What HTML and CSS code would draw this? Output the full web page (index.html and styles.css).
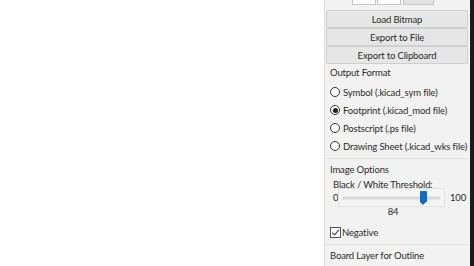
FILE: index.html
```html
<!DOCTYPE html>
<html lang="en">

<head>
    <meta charset="UTF-8">
    <title>Bitmap to Component</title>
    <link rel="stylesheet" href="styles.css">
</head>

<body>
    <div class="canvas"></div>

    <div class="panel">
        <div class="spin-row">
            <span class="spin"></span>
            <span class="spin"></span>
            <span class="spin spin-gray"></span>
        </div>

        <button class="btn">Load Bitmap</button>
        <button class="btn">Export to File</button>
        <button class="btn">Export to Clipboard</button>

        <div class="section">
            <div class="section-title">Output Format</div>
            <label class="radio-row"><span class="radio"></span>Symbol (.kicad_sym file)</label>
            <label class="radio-row"><span class="radio checked"></span>Footprint (.kicad_mod file)</label>
            <label class="radio-row"><span class="radio"></span>Postscript (.ps file)</label>
            <label class="radio-row"><span class="radio"></span>Drawing Sheet (.kicad_wks file)</label>
        </div>

        <div class="section section-line">
            <div class="section-title">Image Options</div>
            <div class="sub-label">Black / White Threshold:</div>
            <div class="slider-row">
                <span class="slider-min">0</span>
                <div class="slider">
                    <div class="track"></div>
                    <div class="thumb"></div>
                </div>
                <span class="slider-max">100</span>
            </div>
            <div class="slider-value">84</div>
            <label class="check-row">
                <span class="checkbox">
                    <svg width="9" height="9" viewBox="0 0 9 9">
                        <path d="M1.2 4.6 L3.5 6.9 L7.9 1.8" fill="none" stroke="#444" stroke-width="1.1" />
                    </svg>
                </span>
                Negative
            </label>
        </div>

        <div class="section section-line section-last">
            <div class="section-title">Board Layer for Outline</div>
        </div>
    </div>

    <div class="edge"></div>
</body>

</html>
```

FILE: styles.css
```css
body {
    margin: 0;
    height: 266px;
    display: flex;
    overflow: hidden;
    background: #fff;
    font-family: Lato, "Liberation Sans", sans-serif;
    font-size: 9.5px;
    letter-spacing: -0.15px;
    color: #2b2b2b;
}

.canvas {
    flex: 1;
    background: #fff;
}

.panel {
    width: 146px;
    background: #f2f2f2;
    border-left: 1px solid #dcdcdc;
    display: flex;
    flex-direction: column;
    padding: 0 2px 0 1px;
    box-sizing: border-box;
    overflow: hidden;
    white-space: nowrap;
}

.panel > * {
    flex-shrink: 0;
}

.edge {
    width: 4px;
    background: #1c1c1c;
}

.spin-row {
    display: flex;
    gap: 1px;
    height: 5px;
    margin-left: 26px;
    margin-bottom: 5px;
}

.spin {
    width: 22px;
    background: #fff;
    border: 1px solid #c9c9c9;
    border-top: none;
}

.spin-gray {
    width: 29px;
    margin-left: 1px;
    background: #e3e3e3;
}

.btn {
    height: 18px;
    background: #e6e6e6;
    border: 1px solid #cfcfcf;
    border-radius: 1px;
    font-family: inherit;
    font-size: 9.5px;
    letter-spacing: inherit;
    color: #2b2b2b;
    padding: 0;
}

.section {
    display: flex;
    flex-direction: column;
    padding-left: 4px;
}

.section-title {
    height: 12px;
    line-height: 12px;
    margin-top: 3px;
    margin-bottom: 4px;
}

.section-line {
    border-top: 1px solid #dedede;
    margin-top: 3px;
    padding-top: 2px;
}

.section-last {
    margin-top: 6px;
}

.radio-row {
    display: flex;
    align-items: center;
    gap: 3px;
    height: 18px;
}

.radio {
    flex-shrink: 0;
    width: 8px;
    height: 8px;
    border: 1px solid #333;
    border-radius: 50%;
    background: #fff;
    display: flex;
    align-items: center;
    justify-content: center;
}

.radio.checked::after {
    content: "";
    width: 5px;
    height: 5px;
    border-radius: 50%;
    background: #222;
}

.sub-label {
    height: 12px;
    line-height: 12px;
    margin-left: 3px;
    margin-top: -1px;
    margin-bottom: -3px;
}

.slider-row {
    display: flex;
    align-items: center;
    height: 19px;
    margin-left: 3px;
}

.slider-min {
    width: 5px;
}

.slider {
    position: relative;
    width: 107px;
    height: 19px;
    border: 1px solid #e2e2e2;
    box-sizing: border-box;
    background: #f5f5f5;
}

.track {
    position: absolute;
    left: 3px;
    right: 3px;
    top: 7px;
    height: 2px;
    background: #d8d8d8;
    border: 1px solid #e8e8e8;
}

.thumb {
    position: absolute;
    top: 2px;
    left: calc(4px + (100% - 8px) * 0.84);
    width: 7px;
    height: 11px;
    margin-left: -4px;
    background: #0b6cc8;
    border-radius: 1px 1px 0 0;
}

.thumb::after {
    content: "";
    position: absolute;
    top: 11px;
    left: 0;
    border-left: 3.5px solid transparent;
    border-right: 3.5px solid transparent;
    border-top: 3px solid #0b6cc8;
}

.slider-max {
    margin-left: 5px;
}

.slider-value {
    text-align: center;
    width: 112px;
    margin-left: 7px;
    margin-top: -1px;
    height: 12px;
    line-height: 12px;
}

.check-row {
    display: flex;
    align-items: center;
    gap: 1px;
    margin-top: 8px;
    height: 12px;
}

.checkbox {
    flex-shrink: 0;
    width: 9px;
    height: 9px;
    border: 1px solid #555;
    background: #fff;
    display: flex;
}
```
